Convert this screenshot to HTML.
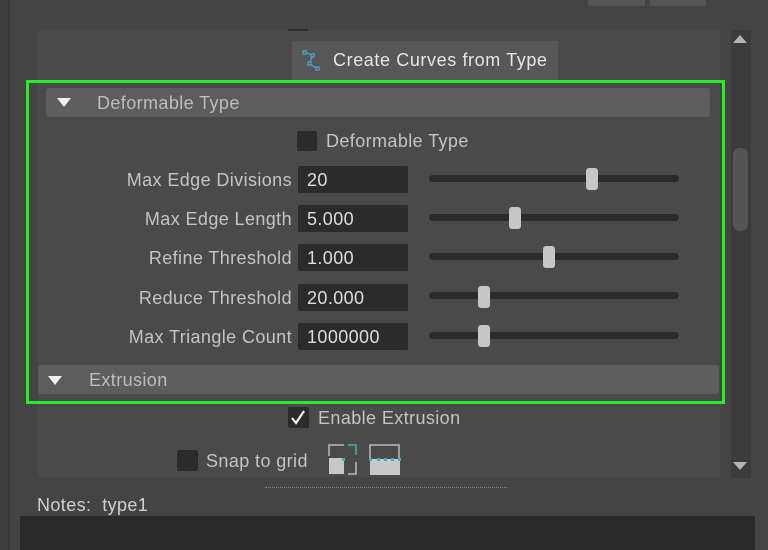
<!DOCTYPE html>
<html><head><style>
*{margin:0;padding:0;box-sizing:border-box}
body{width:768px;height:550px;background:#444;position:relative;overflow:hidden;font-family:"Liberation Sans",sans-serif;color:#cfcfcf;letter-spacing:0.4px}
.a{position:absolute}
.lbl{position:absolute;right:476px;font-size:18px;color:#c4c4c4;white-space:nowrap}
.fld{position:absolute;left:298px;width:110px;height:27px;background:#2b2b2b;border-radius:2px;font-size:18px;color:#ddd;padding:4px 0 0 9px}
.trk{position:absolute;left:429px;width:250px;height:7px;background:#2b2b2b;border-radius:4px}
.hdl{position:absolute;width:12px;height:22px;background:#c6c6c6;border-radius:3px}
</style></head><body>
<div class="a" style="left:0;top:0;width:8px;height:550px;background:#3e3e3e"></div>
<div class="a" style="left:8px;top:0;width:2px;height:550px;background:#383838"></div>
<div class="a" style="left:588px;top:0;width:57px;height:6px;background:#555;border-radius:0 0 2px 2px"></div>
<div class="a" style="left:650px;top:0;width:56px;height:6px;background:#555;border-radius:0 0 2px 2px"></div>
<div class="a" style="left:38px;top:30px;width:682px;height:447px;background:#4a4a4a"></div>
<div class="a" style="left:288px;top:29px;width:20px;height:2px;background:#2e2e2e"></div>
<div class="a" style="left:731px;top:30px;width:20px;height:448px;background:#3b3b3b"></div>
<div class="a" style="left:733px;top:148px;width:15px;height:83px;background:#555;border-radius:7px"></div>
<div class="a" style="left:733px;top:35px;width:0;height:0;border-left:7px solid transparent;border-right:7px solid transparent;border-bottom:8px solid #b5b5b5"></div>
<div class="a" style="left:733px;top:462px;width:0;height:0;border-left:7px solid transparent;border-right:7px solid transparent;border-top:8px solid #b5b5b5"></div>
<div class="a" style="left:292px;top:41px;width:266px;height:40px;background:#575757;border-radius:2px 2px 0 0"></div>
<svg class="a" style="left:302px;top:50px" width="22" height="22" viewBox="0 0 22 22" fill="none" stroke="#4aa3c8" stroke-width="1.3"><rect x="1" y="1" width="3" height="3"/><rect x="9" y="4" width="3" height="3"/><rect x="6" y="12" width="3" height="3"/><rect x="14" y="17" width="3" height="3"/><path d="M4 2.5L9 4.5M10 7L8 12M9 14.5L14 18"/></svg>
<div class="a" style="left:333px;top:50px;font-size:18px;color:#e6e6e6;letter-spacing:0.6px">Create Curves from Type</div>
<div class="a" style="left:26px;top:80px;width:699px;height:324px;border:3px solid #25ee25"></div>
<div class="a" style="left:46px;top:88px;width:664px;height:29px;background:#5d5d5d;border-radius:3px"></div>
<div class="a" style="left:57px;top:98px;width:0;height:0;border-left:7px solid transparent;border-right:7px solid transparent;border-top:9px solid #f0f0f0"></div>
<div class="a" style="left:97px;top:93px;font-size:18px;color:#bdbdbd">Deformable Type</div>
<div class="a" style="left:297px;top:131px;width:20px;height:20px;background:#2b2b2b;border-radius:2px"></div>
<div class="a" style="left:326px;top:131px;font-size:18px;color:#c4c4c4">Deformable Type</div>

<div class="lbl" style="top:170px">Max Edge Divisions</div><div class="fld" style="top:166px">20</div><div class="trk" style="top:175px"></div><div class="hdl" style="left:586px;top:168px"></div>
<div class="lbl" style="top:209px">Max Edge Length</div><div class="fld" style="top:205px">5.000</div><div class="trk" style="top:214px"></div><div class="hdl" style="left:509px;top:207px"></div>
<div class="lbl" style="top:248px">Refine Threshold</div><div class="fld" style="top:244px">1.000</div><div class="trk" style="top:253px"></div><div class="hdl" style="left:543px;top:246px"></div>
<div class="lbl" style="top:288px">Reduce Threshold</div><div class="fld" style="top:284px">20.000</div><div class="trk" style="top:292px"></div><div class="hdl" style="left:478px;top:286px"></div>
<div class="lbl" style="top:327px">Max Triangle Count</div><div class="fld" style="top:323px">1000000</div><div class="trk" style="top:332px"></div><div class="hdl" style="left:478px;top:325px"></div>

<div class="a" style="left:38px;top:365px;width:681px;height:29px;background:#5d5d5d;border-radius:3px"></div>
<div class="a" style="left:48px;top:376px;width:0;height:0;border-left:7px solid transparent;border-right:7px solid transparent;border-top:9px solid #f0f0f0"></div>
<div class="a" style="left:89px;top:370px;font-size:18px;color:#bdbdbd">Extrusion</div>

<div class="a" style="left:288px;top:407px;width:21px;height:21px;background:#2b2b2b;border-radius:2px"></div>
<svg class="a" style="left:290px;top:409px" width="17" height="17" viewBox="0 0 17 17"><path d="M2 9L6 14L14 2" stroke="#f0f0f0" stroke-width="2.2" fill="none"/></svg>
<div class="a" style="left:318px;top:408px;font-size:18px;color:#c4c4c4">Enable Extrusion</div>
<div class="a" style="left:177px;top:450px;width:21px;height:21px;background:#2b2b2b;border-radius:2px"></div>
<div class="a" style="left:206px;top:451px;font-size:18px;color:#c4c4c4">Snap to grid</div>
<svg class="a" style="left:328px;top:444px" width="32" height="32" viewBox="0 0 32 32" fill="none"><path d="M1 12V1H16" stroke="#bbb" stroke-width="1.5"/><path d="M20 1H28V11" stroke="#3ab0c8" stroke-width="1.5"/><rect x="1" y="14" width="15" height="16" fill="#c8c8c8"/><path d="M20 30H28V18" stroke="#bbb" stroke-width="1.5"/><rect x="14" y="14" width="3" height="3" fill="#3ab0c8"/></svg>
<svg class="a" style="left:369px;top:444px" width="32" height="32" viewBox="0 0 32 32"><path d="M1 14V1H30V14" stroke="#bbb" stroke-width="1.5" fill="none"/><rect x="1" y="15" width="30" height="16" fill="#c8c8c8"/><g fill="#3ab0c8"><rect x="0" y="14" width="3" height="3"/><rect x="8" y="14" width="3" height="3"/><rect x="15" y="14" width="3" height="3"/><rect x="22" y="14" width="3" height="3"/><rect x="29" y="14" width="3" height="3"/></g></svg>
<div class="a" style="left:265px;top:487px;width:242px;height:0;border-top:1px dotted #8a8a8a"></div>
<div class="a" style="left:37px;top:495px;font-size:18px;color:#d0d0d0">Notes:&nbsp; type1</div>
<div class="a" style="left:20px;top:516px;width:735px;height:34px;background:#2a2a2a"></div>
</body></html>
